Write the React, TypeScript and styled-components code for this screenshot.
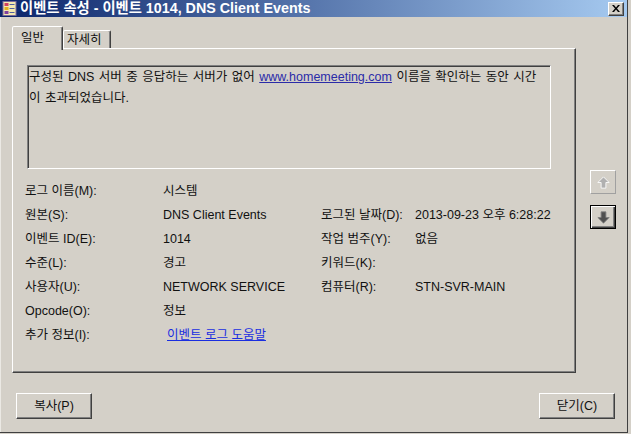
import React from 'react';
import styled, { createGlobalStyle } from 'styled-components';

const FONT = `"Liberation Sans", "Noto Sans CJK KR", sans-serif`;

const GlobalStyle = createGlobalStyle`
  html, body { margin: 0; padding: 0; background: #d4d0c8; }
  body { font-family: ${FONT}; font-size: 12.5px; color: #111; }
  * { box-sizing: border-box; }
`;

const Window = styled.div`
  width: 628px;
  height: 433px;
  border-right: 1px solid #404040;
  border-bottom: 1px solid #404040;
  background: #d4d0c8;
  display: flex;
  flex-direction: column;
`;

const TitleBar = styled.div`
  height: 17px;
  flex: none;
  display: flex;
  align-items: center;
  padding: 0 3px 0 2px;
  background: linear-gradient(to right, #0a246a, #a6caf0);
`;

const TitleText = styled.div`
  flex: 1;
  min-width: 0;
  color: #fff;
  font-family: "Liberation Sans", "Noto Sans CJK KR", sans-serif;
  font-weight: bold;
  font-size: 14.3px;
  line-height: 17px;
  white-space: nowrap;
  margin-left: 3px;
`;

const CloseButton = styled.div`
  width: 16px;
  height: 14px;
  background: #d4d0c8;
  border: 1px solid;
  border-color: #fff #404040 #404040 #fff;
  box-shadow: inset -1px -1px #808080;
  display: flex;
  align-items: center;
  justify-content: center;
`;

const Body = styled.div`
  flex: 1;
  display: flex;
  flex-direction: column;
  padding: 9px 0 0 11px;
  border-left: 1px solid #ebe9e4;
`;

const MainRow = styled.div`
  display: flex;
  align-items: flex-start;
`;

const TabArea = styled.div`
  display: flex;
  flex-direction: column;
  width: 564px;
`;

const TabStrip = styled.div`
  display: flex;
  align-items: flex-end;
  height: 22px;
`;

const Tab = styled.div<{ $active?: boolean }>`
  position: relative;
  z-index: ${(p) => (p.$active ? 1 : 0)};
  height: ${(p) => (p.$active ? 24 : 18)}px;
  margin-bottom: ${(p) => (p.$active ? -2 : 0)}px;
  width: ${(p) => (p.$active ? 51 : 48)}px;
  background: #d4d0c8;
  border: 1px solid;
  border-bottom: none;
  border-color: #fff #404040 transparent #fff;
  box-shadow: inset -1px 0 #808080;
  border-radius: 2px 2px 0 0;
  display: flex;
  align-items: center;
  justify-content: flex-start;
  padding: ${(p) => (p.$active ? '0 0 2px 8px' : '0 0 0 3px')};
  line-height: 16px;
`;

const Panel = styled.div`
  height: 325px;
  border: 1px solid;
  border-color: #fff #404040 #404040 #fff;
  box-shadow: inset -1px -1px #808080;
  padding: 16px 0 0 12px;
`;

const DescBox = styled.div`
  margin-left: 2px;
  width: 524px;
  height: 104px;
  border: 1px solid;
  border-color: #808080 #fff #fff #808080;
  box-shadow: inset 1px 1px #404040;
  padding: 1px 1px;
  line-height: 21px;
  word-spacing: 1px;
  white-space: nowrap;
`;

const DescLink = styled.span`
  color: #2b2ba8;
  text-decoration: underline;
`;

const PropGrid = styled.div`
  margin-top: 10px;
  display: grid;
  grid-template-columns: 138px 158px 94px 1fr;
  grid-auto-rows: 24px;
  line-height: 24px;
  white-space: nowrap;
`;

const Cell = styled.div``;

const HelpLink = styled.span`
  margin-left: 4px;
  color: #1a2ee0;
  text-decoration: underline;
`;

const ArrowColumn = styled.div`
  margin: 144px 0 0 14px;
  display: flex;
  flex-direction: column;
  gap: 11px;
`;

const ArrowButton = styled.div<{ $default?: boolean }>`
  width: 26px;
  height: 24px;
  background: #d4d0c8;
  border: 1px solid;
  border-color: ${(p) => (p.$default ? '#000' : '#fff #a0a0a0 #a0a0a0 #fff')};
  box-shadow: ${(p) =>
    p.$default ? 'inset 1px 1px #fff, inset -1px -1px #404040, inset -2px -2px #808080' : 'none'};
  display: flex;
  align-items: center;
  justify-content: center;
`;

const Footer = styled.div`
  display: flex;
  justify-content: space-between;
  padding: 20px 12px 0 4px;
`;

const Button = styled.div`
  width: 76px;
  height: 26px;
  border: 1px solid;
  border-color: #fff #404040 #404040 #fff;
  box-shadow: inset -1px -1px #808080;
  display: flex;
  align-items: center;
  justify-content: center;
  line-height: 16px;
`;

const AppIcon = () => (
  <svg width="15" height="15" viewBox="0 0 14 15">
    <rect x="0.5" y="0.5" width="13" height="14" fill="#f4e9b0" stroke="#7a6a9a" />
    <rect x="2" y="2" width="4" height="3" fill="#d04060" />
    <rect x="2" y="6" width="4" height="3" fill="#e0b020" />
    <rect x="2" y="10" width="4" height="3" fill="#8040a0" />
    <rect x="7" y="3" width="5" height="1" fill="#5060a0" />
    <rect x="7" y="7" width="5" height="1" fill="#5060a0" />
    <rect x="7" y="11" width="5" height="1" fill="#5060a0" />
  </svg>
);

const CloseIcon = () => (
  <svg width="8" height="7" viewBox="0 0 8 7">
    <path d="M0 0 L2 0 L4 2.5 L6 0 L8 0 L5 3.5 L8 7 L6 7 L4 4.5 L2 7 L0 7 L3 3.5 Z" fill="#000" />
  </svg>
);

const BlockArrow = ({ down, color, edge }: { down?: boolean; color: string; edge: string }) => (
  <svg width="13" height="13" viewBox="0 0 12 12" style={{ transform: down ? 'rotate(180deg)' : undefined }}>
    <polygon points="6,0.8 11.2,6 8.2,6 8.2,11.2 3.8,11.2 3.8,6 0.8,6" fill={color} stroke={edge} strokeWidth="0.8" />
  </svg>
);

const rows: [string, React.ReactNode, string?, string?][] = [
  ['로그 이름(M):', '시스템'],
  ['원본(S):', 'DNS Client Events', '로그된 날짜(D):', '2013-09-23 오후 6:28:22'],
  ['이벤트 ID(E):', '1014', '작업 범주(Y):', '없음'],
  ['수준(L):', '경고', '키워드(K):', ''],
  ['사용자(U):', 'NETWORK SERVICE', '컴퓨터(R):', 'STN-SVR-MAIN'],
  ['Opcode(O):', '정보'],
  ['추가 정보(I):', <HelpLink>이벤트 로그 도움말</HelpLink>],
];

export default function App() {
  return (
    <>
      <GlobalStyle />
      <Window>
        <TitleBar>
          <AppIcon />
          <TitleText>이벤트 속성 - 이벤트 1014, DNS Client Events</TitleText>
          <CloseButton>
            <CloseIcon />
          </CloseButton>
        </TitleBar>
        <Body>
          <MainRow>
            <TabArea>
              <TabStrip>
                <Tab $active>일반</Tab>
                <Tab>자세히</Tab>
              </TabStrip>
              <Panel>
                <DescBox>
                  구성된 DNS 서버 중 응답하는 서버가 없어 <DescLink>www.homemeeting.com</DescLink> 이름을 확인하는 동안 시간
                  <br />이 초과되었습니다.
                </DescBox>
                <PropGrid>
                  {rows.map(([l, v, l2, v2], i) => (
                    <React.Fragment key={i}>
                      <Cell>{l}</Cell>
                      <Cell>{v}</Cell>
                      <Cell>{l2 ?? ''}</Cell>
                      <Cell>{v2 ?? ''}</Cell>
                    </React.Fragment>
                  ))}
                </PropGrid>
              </Panel>
            </TabArea>
            <ArrowColumn>
              <ArrowButton>
                <BlockArrow color="#b0b0b0" edge="#ffffff" />
              </ArrowButton>
              <ArrowButton $default>
                <BlockArrow down color="#505050" edge="#808080" />
              </ArrowButton>
            </ArrowColumn>
          </MainRow>
          <Footer>
            <Button>복사(P)</Button>
            <Button>닫기(C)</Button>
          </Footer>
        </Body>
      </Window>
    </>
  );
}
